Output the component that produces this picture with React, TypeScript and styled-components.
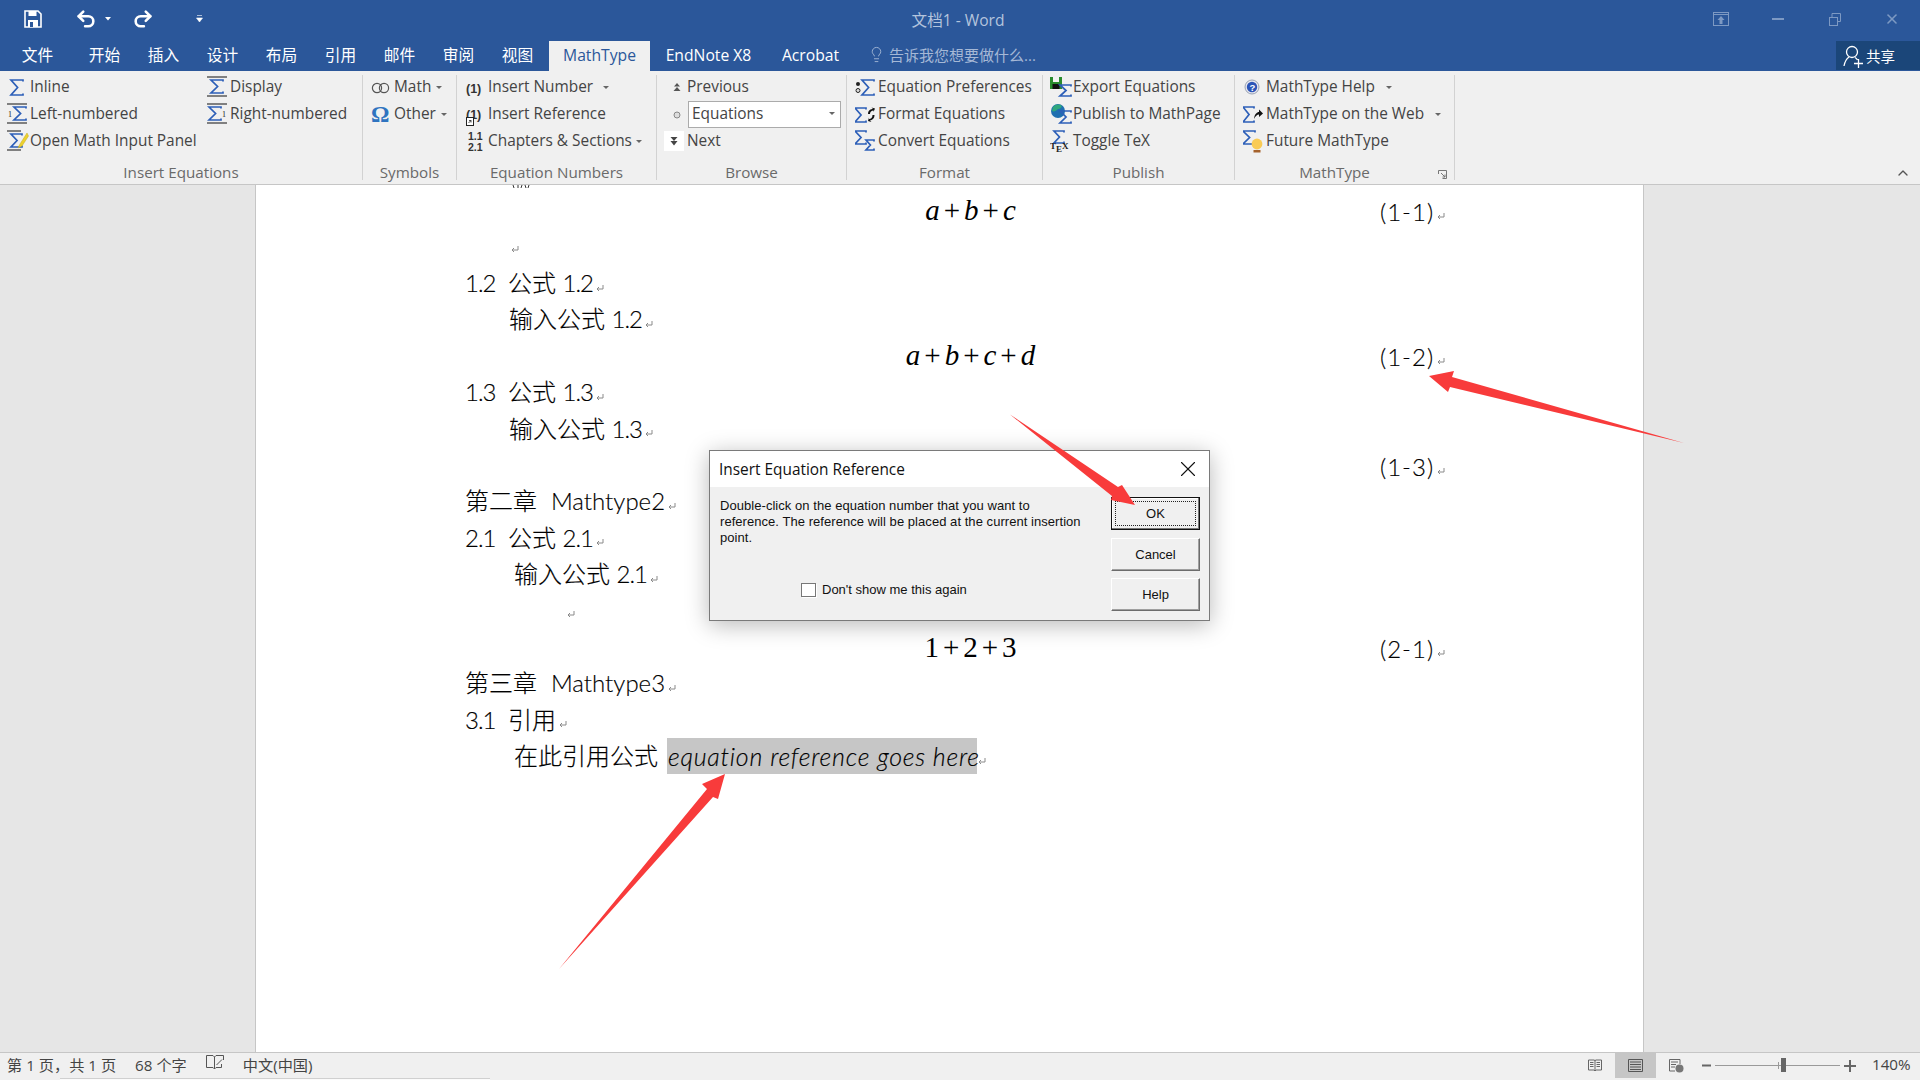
import React from "react";
import styled, { createGlobalStyle } from "styled-components";
import { Undo2, Redo2, Lightbulb, ChevronUp, X } from "lucide-react";

const UI_FONT = `"Open Sans", "Noto Sans CJK SC", sans-serif`;
const DOC_FONT = `"Lato", "Noto Sans CJK SC", sans-serif`;
const BLUE = "#2b579a";

const Global = createGlobalStyle`
  html, body { margin: 0; padding: 0; background: #e6e6e6; overflow: hidden; }
  * { box-sizing: border-box; }
`;

const Shell = styled.div`
  position: relative;
  width: 1920px;
  height: 1080px;
  display: flex;
  flex-direction: column;
  overflow: hidden;
  font-family: ${UI_FONT};
`;

/* ---------- title bar ---------- */
const TitleBar = styled.header`
  height: 41px;
  padding-bottom: 3px;
  background: ${BLUE};
  display: grid;
  grid-template-columns: 1fr auto 1fr;
  align-items: center;
`;
const Qat = styled.div`
  display: flex;
  align-items: center;
  color: #fff;
  padding-left: 24px;
`;
const QatSlot = styled.span<{ $w: number; $ml?: number }>`
  width: ${(p) => p.$w}px;
  margin-left: ${(p) => p.$ml ?? 0}px;
  display: flex;
  align-items: center;
  justify-content: center;
`;
const DocTitle = styled.div`
  color: #b4c4dd;
  font-size: 15.6px;
  padding-right: 4px;
`;
const WinControls = styled.div`
  display: flex;
  justify-content: flex-end;
`;
const WinButton = styled.span`
  width: 57px;
  height: 38px;
  display: flex;
  align-items: center;
  justify-content: center;
  color: #7d99c3;
`;

/* ---------- tabs ---------- */
const TabBar = styled.nav`
  height: 30px;
  background: ${BLUE};
  display: flex;
  align-items: stretch;
`;
const Tab = styled.span<{ $w: number; $active?: boolean; $ml?: number }>`
  width: ${(p) => p.$w}px;
  margin-left: ${(p) => p.$ml ?? 0}px;
  padding-bottom: 3px;
  display: flex;
  align-items: center;
  justify-content: center;
  font-size: 15.7px;
  color: ${(p) => (p.$active ? BLUE : "#fff")};
  background: ${(p) => (p.$active ? "#f0f0f0" : "transparent")};
`;
const TellMe = styled.span`
  display: flex;
  align-items: center;
  margin-left: 21px;
  gap: 4px;
  padding-bottom: 3px;
  color: #a5b8d6;
  font-size: 15px;
`;
const Share = styled.span`
  margin-left: auto;
  width: 84px;
  height: 29px;
  background: #1b4679;
  display: flex;
  align-items: center;
  gap: 1px;
  padding-left: 7px;
  color: #fff;
  font-size: 14.5px;
`;

/* ---------- ribbon ---------- */
const Ribbon = styled.section`
  position: relative;
  height: 114px;
  background: #f0f0f0;
  border-bottom: 1px solid #c6c6c6;
  display: flex;
  align-items: flex-start;
  padding-top: 4px;
`;
const Group = styled.div<{ $w: number; $pad: number }>`
  width: ${(p) => p.$w}px;
  height: 105px;
  flex: none;
  border-right: 1px solid #d2d2d2;
  padding-left: ${(p) => p.$pad}px;
  display: flex;
  flex-direction: column;
  position: relative;
`;
const Rows = styled.div<{ $cols?: string }>`
  display: grid;
  grid-template-columns: ${(p) => p.$cols ?? "1fr"};
  grid-auto-rows: 27px;
  margin-top: -1px;
`;
const RibbonRow = styled.div`
  display: flex;
  align-items: center;
  gap: 1px;
  font-size: 15.4px;
  color: #444;
  white-space: nowrap;
`;
const ItemLabel = styled.span`
  padding-bottom: 2px;
`;
const IconBox = styled.svg`
  width: 22px;
  height: 24px;
  flex: none;
  display: block;
`;
const Caret = styled.i<{ $ml: number }>`
  margin-left: ${(p) => p.$ml}px;
  border-left: 3px solid transparent;
  border-right: 3px solid transparent;
  border-top: 3px solid #666;
`;
const GroupLabel = styled.div<{ $right?: number }>`
  position: absolute;
  left: 0;
  right: ${(p) => p.$right ?? 0}px;
  bottom: 1px;
  line-height: 14px;
  text-align: center;
  font-size: 15.2px;
  color: #6a6a6a;
`;
const Launcher = styled.svg`
  position: absolute;
  right: 7px;
  bottom: 1px;
  width: 9px;
  height: 9px;
`;
const Combo = styled.div`
  width: 153px;
  height: 27px;
  background: #fff;
  border: 1px solid #ababab;
  display: flex;
  align-items: center;
  justify-content: space-between;
  padding: 0 5px 2px 3px;
  margin-left: 1px;
  color: #444;
`;
const CollapseBtn = styled.span`
  position: absolute;
  right: 9px;
  bottom: 3px;
  color: #555;
  display: flex;
`;

/* ---------- document ---------- */
const DocArea = styled.main`
  flex: 1;
  min-height: 0;
  background: #e6e6e6;
  padding-left: 255px;
  display: flex;
`;
const Page = styled.article`
  width: 1389px;
  height: 100%;
  background: #fff;
  border-left: 1px solid #c6c6c6;
  border-right: 1px solid #c6c6c6;
  padding-left: 209px;
  font-family: ${DOC_FONT};
  font-weight: 300;
  font-size: 24px;
  color: #000;
  -webkit-text-stroke: 0.15px #000;
  overflow: hidden;
`;
const PrevLineTail = styled.svg`
  display: block;
  width: 18px;
  height: 3px;
  margin: 0 0 4.2px 47px;
`;
const Line = styled.div<{ $indent?: number }>`
  height: 36.4px;
  line-height: 36.4px;
  padding-left: ${(p) => p.$indent ?? 0}px;
  display: flex;
  align-items: center;
  white-space: pre;
`;
const Num = styled.span<{ $gap?: number }>`
  margin-right: ${(p) => p.$gap ?? 12.5}px;
`;
const Digits = styled.span`
  letter-spacing: -1px;
`;
const EqLine = styled.div`
  height: 36.4px;
  display: grid;
  grid-template-columns: 915px auto;
  align-items: center;
`;
const Formula = styled.div`
  padding-left: 96px;
  text-align: center;
  font-family: "Liberation Serif", serif;
  font-style: italic;
  font-weight: 400;
  font-size: 29px;
  color: #000;
  -webkit-text-stroke: 0;
  white-space: nowrap;
`;
const Plus = styled.span`
  font-style: normal;
  margin: 0 4px;
`;
const Digit = styled.span`
  font-style: normal;
`;
const EqNum = styled.div`
  display: flex;
  align-items: center;
  white-space: nowrap;
  letter-spacing: 1px;
  padding-top: 2px;
`;
const Mark = styled.svg<{ $ml?: number; $mt?: number }>`
  width: 8px;
  height: 8px;
  margin-left: ${(p) => p.$ml ?? 3}px;
  margin-top: ${(p) => p.$mt ?? 9}px;
  flex: none;
  fill: none;
  stroke: #8a8a8a;
  stroke-width: 1;
`;
const Highlight = styled.span`
  display: inline-block;
  height: 36px;
  line-height: 36px;
  width: 310px;
  background: #c6c6c6;
  font-style: italic;
  font-size: 25px;
  letter-spacing: 0.75px;
  padding-left: 1px;
  margin-left: 9px;
  overflow: visible;
`;

/* ---------- status bar ---------- */
const StatusBar = styled.footer`
  height: 26px;
  background: #f0f0f0;
  border-top: 1px solid #c6c6c6;
  display: flex;
  align-items: center;
  font-size: 15.2px;
  color: #444;
`;
const StatusText = styled.span<{ $ml: number }>`
  margin-left: ${(p) => p.$ml}px;
  white-space: nowrap;
  padding-bottom: 3px;
`;
const StatusRight = styled.div`
  margin-left: auto;
  display: flex;
  align-items: center;
  height: 100%;
`;
const ViewBtn = styled.span<{ $active?: boolean; $w: number }>`
  width: ${(p) => p.$w}px;
  height: 100%;
  display: flex;
  align-items: center;
  justify-content: center;
  background: ${(p) => (p.$active ? "#c6c6c6" : "transparent")};
`;
const ZoomMinus = styled.svg`
  width: 10px;
  height: 3px;
  margin-left: 5px;
`;
const ZoomPlus = styled.svg`
  width: 12px;
  height: 12px;
  margin-left: 4px;
`;
const Slider = styled.div`
  position: relative;
  width: 125px;
  height: 1px;
  background: #9a9a9a;
  margin-left: 3px;
`;
const SliderTick = styled.span`
  position: absolute;
  left: 63px;
  top: -3px;
  width: 1px;
  height: 7px;
  background: #9a9a9a;
`;
const SliderThumb = styled.span`
  position: absolute;
  left: 66px;
  top: -7px;
  width: 5px;
  height: 14px;
  background: #666;
`;
const ZoomText = styled.span`
  width: 48px;
  margin-left: 16px;
  padding-bottom: 3px;
  white-space: nowrap;
`;
const BottomEdge = styled.div`
  height: 2px;
  background: #f0f0f0;
  padding: 0 0 0 60px;
  display: flex;
`;
const EdgePiece = styled.span`
  width: 430px;
  background: #fbfbfb;
  border-top: 1px solid #d0d0d0;
`;

/* ---------- dialog ---------- */
const Dialog = styled.section`
  position: absolute;
  left: 709px;
  top: 450px;
  width: 501px;
  height: 171px;
  background: #f0f0f0;
  border: 1px solid #7a7a7a;
  box-shadow: 0 4px 22px rgba(0, 0, 0, 0.28);
  display: flex;
  flex-direction: column;
`;
const DialogTitle = styled.div`
  height: 37px;
  background: #fff;
  display: flex;
  align-items: center;
  justify-content: space-between;
  padding: 0 8px 0 9px;
  font-size: 15.4px;
  color: #111;
`;
const DialogBody = styled.div`
  flex: 1;
  display: grid;
  grid-template-columns: 1fr 89px;
  padding: 10px 9px 9px 10px;
  column-gap: 16px;
`;
const DialogLeft = styled.div`
  display: flex;
  flex-direction: column;
  font-family: "Liberation Sans", sans-serif;
  font-size: 13px;
  line-height: 16px;
  color: #111;
`;
const DialogMsg = styled.p`
  margin: 1px 0 0;
  white-space: nowrap;
  letter-spacing: 0.05px;
`;
const CheckRow = styled.label`
  display: flex;
  align-items: center;
  gap: 6px;
  margin: 36px 0 0 81px;
`;
const CheckBoxSq = styled.span`
  width: 15px;
  height: 14px;
  background: #fff;
  border: 1px solid #777;
  box-shadow: 1px 1px 0 #fff;
`;
const DialogBtns = styled.div`
  display: flex;
  flex-direction: column;
  gap: 7.5px;
`;
const DlgButton = styled.button<{ $def?: boolean }>`
  position: relative;
  width: 89px;
  height: 33px;
  padding: 0;
  background: #f0f0f0;
  font-family: "Liberation Sans", sans-serif;
  font-size: 13px;
  color: #111;
  border: ${(p) => (p.$def ? "1px solid #111" : "1px solid")};
  border-color: ${(p) => (p.$def ? "#111" : "#fff #6c6c6c #6c6c6c #fff")};
  box-shadow: ${(p) => (p.$def ? "inset -1px -1px 0 #777, inset 1px 1px 0 #fff" : "inset -1px -1px 0 #a0a0a0")};
  outline: ${(p) => (p.$def ? "1px dotted #222" : "none")};
  outline-offset: -5px;
`;

const ArrowLayer = styled.svg`
  position: absolute;
  left: 0;
  top: 0;
  width: 1920px;
  height: 1080px;
  pointer-events: none;
`;

/* ---------- icons ---------- */
const sig = (x: number, y: number, w: number, h: number) =>
  `M${x + w} ${y + 1.5}V${y}H${x}L${x + w * 0.55} ${y + h / 2}L${x} ${y + h}H${x + w}V${y + h - 1.5}`;

const Sigma = ({ x, y, w, h }: { x: number; y: number; w: number; h: number }) => (
  <path d={sig(x, y, w, h)} fill="none" stroke="#2d5fb8" strokeWidth="1.7" />
);
const Bars = ({ x1 = 0, x2 = 20 }: { x1?: number; x2?: number }) => (
  <path d={`M${x1} 1H${x2}M${x1} 20H${x2}`} stroke="#111" strokeWidth="1" />
);
const tiny = { fontFamily: "Liberation Serif, serif", fill: "#222" } as const;

const icons: Record<string, React.ReactNode> = {
  inline: <Sigma x={4} y={4} w={12} h={15} />,
  display: (
    <>
      <Bars />
      <Sigma x={4} y={4} w={12} h={13} />
    </>
  ),
  left: (
    <>
      <Bars />
      <text x={1} y={14} fontSize={8} {...tiny}>1</text>
      <Sigma x={7} y={4} w={12} h={13} />
    </>
  ),
  right: (
    <>
      <Bars />
      <Sigma x={2} y={4} w={12} h={13} />
      <text x={15} y={14} fontSize={8} {...tiny}>1</text>
    </>
  ),
  panel: (
    <>
      <Bars x2={14} />
      <Sigma x={4} y={4} w={11} h={13} />
      <path d="M20 3L13 14L11 18L15 16L21.5 6Z" fill="#ecd22e" stroke="#c9a820" strokeWidth=".5" />
    </>
  ),
  math: (
    <g fill="none" stroke="#555" strokeWidth="1.2">
      <circle cx="6" cy="12" r="4.6" />
      <circle cx="13" cy="12" r="4.6" />
    </g>
  ),
  omega: (
    <text x={0} y={19} fontSize={23} fontWeight={700} fill="#2f74c0" fontFamily="Liberation Serif, serif">Ω</text>
  ),
  number: (
    <text x={1} y={17} fontSize={12.5} fontWeight={700} fill="#333" fontFamily="Liberation Sans, sans-serif">(1)</text>
  ),
  reference: (
    <>
      <text x={1} y={16} fontSize={12.5} fontWeight={700} fill="#333" fontFamily="Liberation Sans, sans-serif">(1)</text>
      <rect x="1.5" y="14.5" width="7" height="8" fill="#fff" stroke="#222" />
      <path d="M3.5 20L6 17.5M4 17.5H6V19.5" stroke="#222" fill="none" strokeWidth=".8" />
    </>
  ),
  chapters: (
    <g fill="#333" fontSize={10.5} fontWeight={700} fontFamily="Liberation Sans, sans-serif">
      <text x={3} y={10}>1.1</text>
      <text x={3} y={21}>2.1</text>
    </g>
  ),
  prev: (
    <path d="M13 7L16 10.5H10ZM13 11L16.5 15H9.5Z" fill="#555" />
  ),
  circle: <circle cx="13" cy="12" r="3" fill="#ddd" stroke="#888" />,
  next: (
    <>
      <rect x="0" y="1" width="20" height="20" fill="#fff" />
      <path d="M6.5 7H13.5L10 11ZM6.5 11H13.5L10 15.5Z" fill="#444" />
    </>
  ),
  prefs: (
    <>
      <circle cx="3" cy="8" r="2" fill="#222" />
      <circle cx="3" cy="14.5" r="2" fill="#ddd" stroke="#222" />
      <Sigma x={7} y={4} w={12} h={15} />
    </>
  ),
  format: (
    <>
      <Sigma x={0} y={5} w={11} h={14} />
      <path d="M13 11C13 7 16 6 18 6L16.5 4.5L20 5.5L18.5 9V7.5C16.5 7.5 15 9 15 11ZM19.5 12C19.5 16 17 17 15 17.5L16.5 19L13 18L14 14.5V16C16 16 17.5 14.5 17.5 12Z" fill="#111" />
    </>
  ),
  convert: (
    <>
      <Sigma x={0} y={1} w={11} h={13} />
      <Sigma x={11} y={10} w={8} h={10} />
    </>
  ),
  exportEq: (
    <>
      <rect x="0" y="1" width="12" height="12" fill="#2a8c2e" />
      <rect x="3" y="1" width="6" height="5" fill="#f3f3f3" />
      <rect x="2.5" y="8" width="7" height="5" fill="#111" />
      <Sigma x={10} y={9} w={11} h={11} />
    </>
  ),
  globe: (
    <>
      <circle cx="8" cy="8" r="7" fill="#1f6fb0" />
      <path d="M3 4C5 1 9 1 11 2C13 4 10 6 8 6C6 8 4 9 2 8Z" fill="#2fa77c" />
      <Sigma x={10} y={8} w={11} h={12} />
    </>
  ),
  tex: (
    <>
      <Sigma x={4} y={1} w={10} h={12} />
      <text x={0} y={19} fontSize={9} fontWeight={700} fill="#222" fontFamily="Liberation Serif, serif">T</text>
      <text x={6} y={22} fontSize={9} fontWeight={700} fill="#222" fontFamily="Liberation Serif, serif">E</text>
      <text x={12} y={19} fontSize={9} fontWeight={700} fill="#222" fontFamily="Liberation Serif, serif">X</text>
    </>
  ),
  help: (
    <>
      <circle cx="9" cy="11" r="7" fill="#e6e6ee" stroke="#9aa3b5" />
      <circle cx="9" cy="11" r="5.2" fill="#2c55b8" />
      <text x={6.5} y={14.5} fontSize={9.5} fontWeight={700} fill="#fff" fontFamily="Liberation Sans, sans-serif">?</text>
    </>
  ),
  web: (
    <>
      <Sigma x={0} y={4} w={11} h={15} />
      <path d="M11 16C11.5 11 14 9 16 9V6.5L20 10.5L16 14V11.5C14 11.5 12.5 13 11 16Z" fill="#111" />
    </>
  ),
  future: (
    <>
      <Sigma x={0} y={1} w={12} h={13} />
      <circle cx="14" cy="14" r="5.4" fill="#f9cb55" />
      <rect x="10.5" y="20" width="7" height="2.5" fill="#a5622c" />
    </>
  ),
};

const Icon = ({ kind }: { kind: string }) => (
  <IconBox viewBox="0 0 22 24">{icons[kind]}</IconBox>
);

const Ret = ({ ml, mt }: { ml?: number; mt?: number }) => (
  <Mark viewBox="0 0 8 8" $ml={ml} $mt={mt}>
    <path d="M7 1V5H1M3 3L1 5L3 7" />
  </Mark>
);

const Item = ({ icon, label, caret }: { icon: string; label: string; caret?: number }) => (
  <RibbonRow>
    <Icon kind={icon} />
    <ItemLabel>{label}</ItemLabel>
    {caret !== undefined && <Caret $ml={caret} />}
  </RibbonRow>
);

const tabs: [string, number][] = [
  ["文件", 75], ["开始", 59], ["插入", 59], ["设计", 59], ["布局", 59],
  ["引用", 59], ["邮件", 59], ["审阅", 59], ["视图", 59],
];

const Arrow = ({ points }: { points: string }) => <polygon points={points} fill="#f83b3b" />;

export default function App() {
  return (
    <Shell>
      <Global />
      <TitleBar>
        <Qat>
          <QatSlot $w={18}>
            <svg width="18" height="18" viewBox="0 0 18 18">
              <path d="M1 1H14L17 4V17H1Z" fill="none" stroke="#fff" strokeWidth="1.6" />
              <rect x="4.5" y="1" width="8" height="5" fill="#fff" />
              <rect x="4" y="10" width="10" height="7" fill="#fff" />
              <rect x="6" y="12" width="3" height="5" fill="#2b579a" />
            </svg>
          </QatSlot>
          <QatSlot $w={22} $ml={33}><Undo2 size={22} strokeWidth={2.8} /></QatSlot>
          <QatSlot $w={6} $ml={8}>
            <svg width="6" height="4"><path d="M0 0H6L3 3.5Z" fill="#fff" /></svg>
          </QatSlot>
          <QatSlot $w={22} $ml={21}><Redo2 size={22} strokeWidth={2.8} /></QatSlot>
          <QatSlot $w={7} $ml={42}>
            <svg width="7" height="8"><path d="M1 0.5H6M0.5 3H6.5L3.5 7Z" fill="#fff" stroke="#fff" strokeWidth=".6" /></svg>
          </QatSlot>
        </Qat>
        <DocTitle>文档1 - Word</DocTitle>
        <WinControls>
          <WinButton>
            <svg width="16" height="14" viewBox="0 0 16 14" fill="none" stroke="currentColor">
              <rect x=".5" y=".5" width="15" height="13" />
              <path d="M1 2.5H15" />
              <path d="M8 4L11.5 8H9.5V12H6.5V8H4.5Z" fill="currentColor" stroke="none" />
            </svg>
          </WinButton>
          <WinButton>
            <svg width="12" height="2"><rect width="12" height="2" fill="currentColor" /></svg>
          </WinButton>
          <WinButton>
            <svg width="12" height="13" viewBox="0 0 12 13" fill="none" stroke="currentColor">
              <rect x=".5" y="4.5" width="8" height="8" />
              <path d="M3 4V.5H11.5V8.5H9" />
            </svg>
          </WinButton>
          <WinButton><X size={16} strokeWidth={2.4} /></WinButton>
        </WinControls>
      </TitleBar>

      <TabBar>
        {tabs.map(([t, w]) => (
          <Tab key={t} $w={w}>{t}</Tab>
        ))}
        <Tab $w={101} $ml={2} $active>MathType</Tab>
        <Tab $w={117}>EndNote X8</Tab>
        <Tab $w={73} $ml={7}>Acrobat</Tab>
        <TellMe>
          <Lightbulb size={17} strokeWidth={1.3} />
          告诉我您想要做什么...
        </TellMe>
        <Share>
          <svg width="22" height="24" viewBox="0 0 22 24" fill="none" stroke="#fff" strokeWidth="1.3">
            <circle cx="9" cy="8" r="5.5" />
            <path d="M1 22C2 16 4 14.5 6 13M12 13.5C13 14 14 15 14.5 16M11 19.5H20M15.5 15V24" />
          </svg>
          共享
        </Share>
      </TabBar>

      <Ribbon>
        <Group $w={363} $pad={7}>
          <Rows $cols="200px 1fr">
            <Item icon="inline" label="Inline" />
            <Item icon="display" label="Display" />
            <Item icon="left" label="Left-numbered" />
            <Item icon="right" label="Right-numbered" />
            <Item icon="panel" label="Open Math Input Panel" />
          </Rows>
          <GroupLabel>Insert Equations</GroupLabel>
        </Group>
        <Group $w={94} $pad={8}>
          <Rows>
            <Item icon="math" label="Math" caret={4} />
            <Item icon="omega" label="Other" caret={4} />
          </Rows>
          <GroupLabel>Symbols</GroupLabel>
        </Group>
        <Group $w={200} $pad={8}>
          <Rows>
            <Item icon="number" label="Insert Number" caret={9} />
            <Item icon="reference" label="Insert Reference" />
            <Item icon="chapters" label="Chapters &amp; Sections" caret={3} />
          </Rows>
          <GroupLabel>Equation Numbers</GroupLabel>
        </Group>
        <Group $w={190} $pad={7}>
          <Rows>
            <Item icon="prev" label="Previous" />
            <RibbonRow>
              <Icon kind="circle" />
              <Combo>Equations<Caret $ml={0} /></Combo>
            </RibbonRow>
            <Item icon="next" label="Next" />
          </Rows>
          <GroupLabel>Browse</GroupLabel>
        </Group>
        <Group $w={196} $pad={8}>
          <Rows>
            <Item icon="prefs" label="Equation Preferences" />
            <Item icon="format" label="Format Equations" />
            <Item icon="convert" label="Convert Equations" />
          </Rows>
          <GroupLabel>Format</GroupLabel>
        </Group>
        <Group $w={192} $pad={7}>
          <Rows>
            <Item icon="exportEq" label="Export Equations" />
            <Item icon="globe" label="Publish to MathPage" />
            <Item icon="tex" label="Toggle TeX" />
          </Rows>
          <GroupLabel>Publish</GroupLabel>
        </Group>
        <Group $w={220} $pad={8}>
          <Rows>
            <Item icon="help" label="MathType Help" caret={10} />
            <Item icon="web" label="MathType on the Web" caret={10} />
            <Item icon="future" label="Future MathType" />
          </Rows>
          <GroupLabel $right={20}>MathType</GroupLabel>
          <Launcher viewBox="0 0 9 9" fill="none" stroke="#777">
            <path d="M.5 4V.5H8.5V8.5H4.5M3 3L7 7M7 4.5V7H4.5" />
          </Launcher>
        </Group>
        <CollapseBtn><ChevronUp size={16} strokeWidth={2} /></CollapseBtn>
      </Ribbon>

      <DocArea>
        <Page>
          <PrevLineTail viewBox="0 0 18 3" stroke="#333">
            <path d="M1 0L2 3M6 0L6 3M10 0L9 3M13 0L14 3M17 0L16 3" />
          </PrevLineTail>
          <EqLine>
            <Formula>a<Plus>+</Plus>b<Plus>+</Plus>c</Formula>
            <EqNum>(1-1)<Ret /></EqNum>
          </EqLine>
          <Line $indent={46}><Ret ml={0} mt={5} /></Line>
          <Line><Num><Digits>1.2</Digits></Num>公式 <Digits>1.2</Digits><Ret /></Line>
          <Line $indent={44}>输入公式 <Digits>1.2</Digits><Ret /></Line>
          <EqLine>
            <Formula>a<Plus>+</Plus>b<Plus>+</Plus>c<Plus>+</Plus>d</Formula>
            <EqNum>(1-2)<Ret /></EqNum>
          </EqLine>
          <Line><Num><Digits>1.3</Digits></Num>公式 <Digits>1.3</Digits><Ret /></Line>
          <Line $indent={44}>输入公式 <Digits>1.3</Digits><Ret /></Line>
          <EqLine>
            <Formula />
            <EqNum>(1-3)<Ret /></EqNum>
          </EqLine>
          <Line><Num $gap={14}>第二章</Num>Mathtype2<Ret /></Line>
          <Line><Num><Digits>2.1</Digits></Num>公式 <Digits>2.1</Digits><Ret /></Line>
          <Line $indent={49}>输入公式 <Digits>2.1</Digits><Ret /></Line>
          <Line $indent={102}><Ret ml={0} mt={7} /></Line>
          <EqLine>
            <Formula><Digit>1</Digit><Plus>+</Plus><Digit>2</Digit><Plus>+</Plus><Digit>3</Digit></Formula>
            <EqNum>(2-1)<Ret /></EqNum>
          </EqLine>
          <Line><Num $gap={14}>第三章</Num>Mathtype3<Ret /></Line>
          <Line><Num><Digits>3.1</Digits></Num>引用<Ret /></Line>
          <Line $indent={49}>在此引用公式<Highlight>equation reference goes here</Highlight><Ret ml={1} /></Line>
        </Page>
      </DocArea>

      <StatusBar>
        <StatusText $ml={7}>第 1 页，共 1 页</StatusText>
        <StatusText $ml={19}>68 个字</StatusText>
        <StatusText $ml={19}>
          <svg width="18" height="16" viewBox="0 0 18 16" fill="none" stroke="#555">
            <path d="M.5 1.5H7L8.5 3V15L7 13.5H.5ZM8.5 3L10 1.5H17.5V6M8.5 15L10 13.5H15.5V10M10.5 11L16 5.5" />
          </svg>
        </StatusText>
        <StatusText $ml={19}>中文(中国)</StatusText>
        <StatusRight>
          <ViewBtn $w={41}>
            <svg width="14" height="13" viewBox="0 0 14 13" fill="none" stroke="#666">
              <path d="M.5 1H6.5L7 2L7.5 1H13.5V11H8L7 12L6 11H.5ZM7 2V11M2 3.5H5.5M2 5.5H5.5M2 7.5H5.5M8.5 3.5H12M8.5 5.5H12M8.5 7.5H12" />
            </svg>
          </ViewBtn>
          <ViewBtn $w={41} $active>
            <svg width="15" height="13" viewBox="0 0 15 13" fill="none" stroke="#555">
              <path d="M.5 .5H14.5V12.5H.5ZM2 3H13M2 5.5H13M2 8H13M2 10.5H13" />
            </svg>
          </ViewBtn>
          <ViewBtn $w={41}>
            <svg width="15" height="14" viewBox="0 0 15 14" fill="none" stroke="#666">
              <path d="M.5 .5H11V5M.5 .5V12H6M2 3H9M2 5.5H7M2 8H6" />
              <circle cx="10.5" cy="9.5" r="4" fill="#777" stroke="none" />
            </svg>
          </ViewBtn>
          <ZoomMinus viewBox="0 0 10 3"><rect y=".5" width="9" height="2" fill="#666" /></ZoomMinus>
          <Slider>
            <SliderTick />
            <SliderThumb />
          </Slider>
          <ZoomPlus viewBox="0 0 12 12"><path d="M0 5H12V7H0ZM5 0H7V12H5Z" fill="#666" /></ZoomPlus>
          <ZoomText>140%</ZoomText>
        </StatusRight>
      </StatusBar>
      <BottomEdge><EdgePiece /></BottomEdge>

      <Dialog>
        <DialogTitle>
          Insert Equation Reference
          <X size={26} strokeWidth={1} color="#111" />
        </DialogTitle>
        <DialogBody>
          <DialogLeft>
            <DialogMsg>
              Double-click on the equation number that you want to<br />
              reference. The reference will be placed at the current insertion<br />
              point.
            </DialogMsg>
            <CheckRow>
              <CheckBoxSq />
              Don't show me this again
            </CheckRow>
          </DialogLeft>
          <DialogBtns>
            <DlgButton $def>OK</DlgButton>
            <DlgButton>Cancel</DlgButton>
            <DlgButton>Help</DlgButton>
          </DialogBtns>
        </DialogBody>
      </Dialog>

      <ArrowLayer viewBox="0 0 1920 1080">
        <Arrow points="1010,414.5 1118,487 1122,485 1135,505 1111,500 1112,496" />
        <Arrow points="1429,376 1454,371 1452,377 1684,443 1450,387 1448,392" />
        <Arrow points="725,774 702,784 707,789 559,969 713,797 718,799" />
      </ArrowLayer>
    </Shell>
  );
}
